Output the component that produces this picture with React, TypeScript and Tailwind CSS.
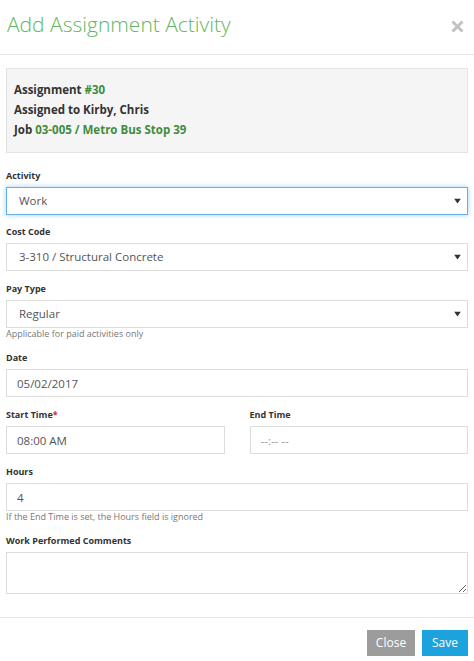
const font = { fontFamily: '"Open Sans", "Liberation Sans", sans-serif' };

function Arrow() {
  return (
    <svg
      className="pointer-events-none absolute right-[7px] top-1/2 -translate-y-1/2"
      width="7"
      height="5"
      viewBox="0 0 7 5"
    >
      <polygon points="0,0 7,0 3.5,5" fill="#333" />
    </svg>
  );
}

function Label({ children }: { children: React.ReactNode }) {
  return (
    <label className="mb-[4px] block text-[9px] font-bold leading-[14px] text-[#333]">
      {children}
    </label>
  );
}

function Select({ value, focused }: { value: string; focused?: boolean }) {
  return (
    <div className="relative">
      <select
        value={value}
        onChange={() => {}}
        className={
          focused
            ? "block h-[28px] w-full appearance-none rounded-none border border-[#66afe9] bg-white pl-[12px] text-[11.5px] text-[#555] shadow-[0_0_5px_rgba(102,175,233,0.6)] outline-none"
            : "block h-[28px] w-full appearance-none rounded-none border border-[#dcdcdc] bg-white pl-[12px] text-[11.5px] text-[#555] outline-none"
        }
        style={font}
      >
        <option>{value}</option>
      </select>
      <Arrow />
    </div>
  );
}

function Input({ value, placeholder }: { value?: string; placeholder?: string }) {
  return (
    <input
      readOnly
      value={value ?? ""}
      placeholder={placeholder}
      className="block h-[28px] w-full rounded-none border border-[#dcdcdc] bg-white px-[10px] text-[11.5px] text-[#555] outline-none placeholder:text-[#999]"
      style={font}
    />
  );
}

function Help({ children }: { children: React.ReactNode }) {
  return <p className="text-[9px] leading-[12px] text-[#777]">{children}</p>;
}

export default function App() {
  return (
    <div className="h-[661px] w-[474px] overflow-hidden bg-white" style={font}>
      <header className="relative h-[55px] border-b border-[#e8e8e8] px-[7px] pt-[9px]">
        <h1 className="text-[21px] font-light leading-[30px] text-[#62b662]">
          Add Assignment Activity
        </h1>
        <button className="absolute right-[10px] top-[20px]" aria-label="Close">
          <svg width="13" height="13" viewBox="0 0 13 13">
            <path d="M1.5 1.5 L11.5 11.5 M11.5 1.5 L1.5 11.5" stroke="#c2c2c2" strokeWidth="3" />
          </svg>
        </button>
      </header>

      <div className="px-[6px] pb-[23px] pt-[13px]">
        <div className="border border-[#e3e3e3] bg-[#f5f5f5] px-[7px] pb-[12px] pt-[11px] text-[11.5px] font-bold leading-[20px] text-[#333]">
          <div>
            Assignment <span className="text-[#3f8c3f]">#30</span>
          </div>
          <div>Assigned to Kirby, Chris</div>
          <div>
            Job <span className="text-[#3f8c3f]">03-005 / Metro Bus Stop 39</span>
          </div>
        </div>

        <div className="mt-[16px]">
          <Label>Activity</Label>
          <Select value="Work" focused />
        </div>

        <div className="mt-[10px]">
          <Label>Cost Code</Label>
          <Select value="3-310 / Structural Concrete" />
        </div>

        <div className="mt-[11px]">
          <Label>Pay Type</Label>
          <Select value="Regular" />
          <Help>Applicable for paid activities only</Help>
        </div>

        <div className="mt-[11px]">
          <Label>Date</Label>
          <Input value="05/02/2017" />
        </div>

        <div className="mt-[11px] grid grid-cols-2 gap-[25px]">
          <div>
            <Label>
              Start Time<span className="text-[#c9302c]">*</span>
            </Label>
            <Input value="08:00 AM" />
          </div>
          <div>
            <Label>End Time</Label>
            <Input placeholder="--:-- --" />
          </div>
        </div>

        <div className="mt-[11px]">
          <Label>Hours</Label>
          <Input value="4" />
          <Help>If the End Time is set, the Hours field is ignored</Help>
        </div>

        <div className="mt-[11px]">
          <Label>Work Performed Comments</Label>
          <textarea
            readOnly
            className="block h-[42px] w-full rounded-none border border-[#dcdcdc] bg-white px-[10px] text-[11.5px] text-[#555] outline-none"
            style={font}
          />
        </div>
      </div>

      <footer className="flex justify-end gap-[7px] border-t border-[#e8e8e8] px-[6px] pt-[12px]">
        <button className="h-[26px] w-[48px] bg-[#9c9c9c] text-[12px] text-white">Close</button>
        <button className="h-[26px] w-[46px] bg-[#1ca2dc] text-[12px] text-white">Save</button>
      </footer>
    </div>
  );
}
